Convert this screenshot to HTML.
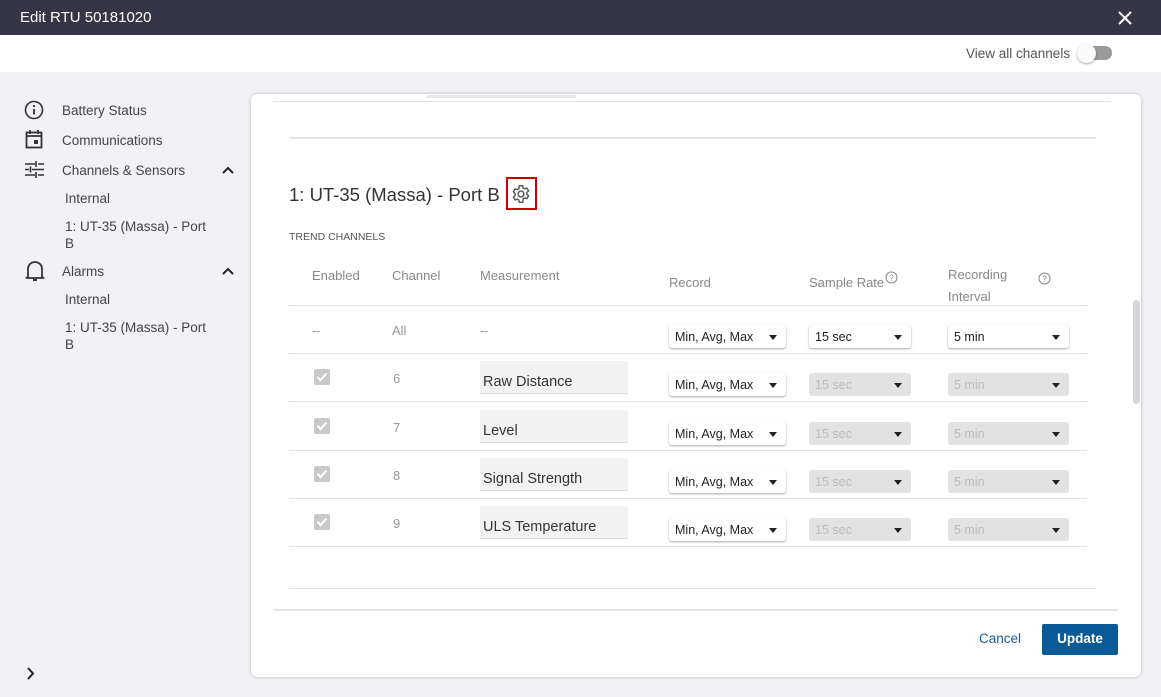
<!DOCTYPE html>
<html><head><style>
*{box-sizing:border-box;margin:0;padding:0}
body{width:1161px;height:697px;position:relative;overflow:hidden;background:#f2f1f6;font-family:"Liberation Sans",sans-serif;color:#333}
.a{position:absolute;white-space:nowrap}
.hd{left:0;top:0;width:1161px;height:35px;background:#363547;color:#fff;font-size:15px;padding:9px 0 0 20px}
.wb{left:0;top:35px;width:1161px;height:37px;background:#fff}
.nav{font-size:13.5px;color:#444}
.card{left:251px;top:94px;width:890px;height:583px;background:#fff;border-radius:6px;box-shadow:0 0 3px rgba(0,0,0,.25)}
.ln{height:1px;background:#e4e4e4}
.th{font-size:13px;color:#888}
.td{font-size:13px;color:#999}
.sel{height:23px;border-radius:3px;background:#fff;box-shadow:0 1px 2px rgba(0,0,0,.35);font-size:12.5px;color:#222;padding:5px 0 0 6px}
.sel.d{background:#e2e2e2;box-shadow:none;color:#bbb}
.sel:after{content:"";position:absolute;right:9px;top:10px;border-left:4.5px solid transparent;border-right:4.5px solid transparent;border-top:5px solid #222}
.ms{width:148px;height:33px;background:#f2f2f2;border-bottom:1px solid #ddd;font-size:14.5px;color:#333;padding:13px 0 0 3px}
.cb{width:16px;height:16px;background:#c9c9c9;border-radius:2px}
.cb svg{position:absolute;left:2px;top:2px}
</style></head><body>
<div class="a hd">Edit RTU 50181020</div>
<svg class="a" style="left:1118px;top:11px" width="14" height="14"><path d="M1 1L13 13M13 1L1 13" stroke="#fff" stroke-width="2"/></svg>
<div class="a wb"></div>
<div class="a" style="left:966px;top:46px;font-size:13.5px;color:#555">View all channels</div>
<div class="a" style="left:1081px;top:46px;width:31px;height:14px;border-radius:7px;background:#9a9a9a"></div>
<div class="a" style="left:1077px;top:44px;width:19px;height:19px;border-radius:50%;background:#fafafa;box-shadow:0 1px 2px rgba(0,0,0,.35)"></div>

<svg class="a" style="left:24px;top:100px" width="20" height="20"><circle cx="10" cy="10" r="8.5" fill="none" stroke="#333" stroke-width="1.6"/><path d="M10 9v5.5" stroke="#333" stroke-width="1.8"/><circle cx="10" cy="6" r="1.1" fill="#333"/></svg>
<div class="a nav" style="left:62px;top:103px">Battery Status</div>
<svg class="a" style="left:25px;top:129px" width="18" height="20"><rect x="1.5" y="3.5" width="15" height="15" fill="none" stroke="#333" stroke-width="1.8"/><path d="M1.5 7h15M5 1v4M13 1v4" stroke="#333" stroke-width="1.8"/><rect x="9" y="11" width="4" height="4" fill="#333"/></svg>
<div class="a nav" style="left:62px;top:133px">Communications</div>
<svg class="a" style="left:25px;top:161px" width="19" height="17"><path d="M0 3h10M13 3h6M11 0v6M0 8.5h4M7 8.5h12M5.5 5.5v6M0 14h10M13 14h6M11 11v6" stroke="#333" stroke-width="1.6"/></svg>
<div class="a nav" style="left:62px;top:163px">Channels &amp; Sensors</div>
<svg class="a" style="left:222px;top:166px" width="12" height="8"><path d="M1 7L6 2L11 7" fill="none" stroke="#222" stroke-width="2"/></svg>
<div class="a nav" style="left:65px;top:191px">Internal</div>
<div class="a nav" style="left:65px;top:218px;white-space:normal;width:150px;line-height:17px">1: UT-35 (Massa) - Port B</div>
<svg class="a" style="left:24px;top:259px" width="22" height="24"><path d="M4 18V10a7 7 0 0 1 14 0v8l2 1H2z" fill="none" stroke="#333" stroke-width="1.8"/><path d="M9 21h4" stroke="#333" stroke-width="2"/></svg>
<div class="a nav" style="left:62px;top:264px">Alarms</div>
<svg class="a" style="left:222px;top:267px" width="12" height="8"><path d="M1 7L6 2L11 7" fill="none" stroke="#222" stroke-width="2"/></svg>
<div class="a nav" style="left:65px;top:292px">Internal</div>
<div class="a nav" style="left:65px;top:319px;white-space:normal;width:150px;line-height:17px">1: UT-35 (Massa) - Port B</div>
<svg class="a" style="left:26px;top:667px" width="10" height="13"><path d="M2 1l5 5.5L2 12" fill="none" stroke="#222" stroke-width="2"/></svg>

<div class="a card"></div>
<div class="a" style="left:427px;top:95px;width:149px;height:3px;background:#e8e8e8"></div>
<div class="a ln" style="left:273px;top:101px;width:838px"></div>
<div class="a ln" style="left:289px;top:137px;width:807px;height:2px"></div>
<div class="a" style="left:289px;top:184px;font-size:18.5px;color:#333">1: UT-35 (Massa) - Port B</div>
<div class="a" style="left:506px;top:177px;width:31px;height:33px;border:2px solid #c00"></div>
<svg class="a" style="left:511px;top:184px" width="20" height="20" viewBox="0 0 24 24"><path d="M12 8.5a3.5 3.5 0 1 0 0 7a3.5 3.5 0 1 0 0-7zM10 2h4l.6 2.8 1.8 1 2.7-.9 2 3.4-2.1 1.9v2.1l2.1 1.9-2 3.4-2.7-.9-1.8 1L14 22h-4l-.6-2.8-1.8-1-2.7.9-2-3.4 2.1-1.9v-2.1L2.9 9.3l2-3.4 2.7.9 1.8-1z" fill="none" stroke="#555" stroke-width="1.7" stroke-linejoin="round"/></svg>
<div class="a" style="left:289px;top:231px;font-size:10.5px;color:#555">TREND CHANNELS</div>

<div class="a th" style="left:312px;top:268px">Enabled</div>
<div class="a th" style="left:392px;top:268px">Channel</div>
<div class="a th" style="left:480px;top:268px">Measurement</div>
<div class="a th" style="left:669px;top:275px">Record</div>
<div class="a th" style="left:809px;top:275px">Sample Rate</div>
<svg class="a" style="left:885px;top:271px" width="13" height="13"><circle cx="6.5" cy="6.5" r="5.5" fill="none" stroke="#888"/><text x="6.5" y="9.5" font-size="8" text-anchor="middle" fill="#888" font-family="Liberation Sans">?</text></svg>
<div class="a th" style="left:948px;top:264px;line-height:22px">Recording<br>Interval</div>
<svg class="a" style="left:1038px;top:272px" width="13" height="13"><circle cx="6.5" cy="6.5" r="5.5" fill="none" stroke="#888"/><text x="6.5" y="9.5" font-size="8" text-anchor="middle" fill="#888" font-family="Liberation Sans">?</text></svg>
<div class="a ln" style="left:289px;top:305px;width:798px"></div>

<div class="a td" style="left:312px;top:323px">--</div>
<div class="a td" style="left:392px;top:323px">All</div>
<div class="a td" style="left:480px;top:323px">--</div>
<div class="a sel" style="left:669px;top:325px;width:117px">Min, Avg, Max</div>
<div class="a sel" style="left:809px;top:325px;width:102px">15 sec</div>
<div class="a sel" style="left:948px;top:325px;width:121px">5 min</div>
<div class="a ln" style="left:289px;top:353px;width:798px"></div>

<!-- rows -->
<div class="a cb" style="left:314px;top:369px"><svg width="12" height="12"><path d="M1.5 6l3 3 6-6.5" fill="none" stroke="#fff" stroke-width="2"/></svg></div>
<div class="a td" style="left:393px;top:371px">6</div>
<div class="a ms" style="left:480px;top:361px">Raw Distance</div>
<div class="a sel" style="left:669px;top:373px;width:117px">Min, Avg, Max</div>
<div class="a sel d" style="left:809px;top:373px;width:102px">15 sec</div>
<div class="a sel d" style="left:948px;top:373px;width:121px">5 min</div>
<div class="a ln" style="left:289px;top:401px;width:798px"></div>

<div class="a cb" style="left:314px;top:418px"><svg width="12" height="12"><path d="M1.5 6l3 3 6-6.5" fill="none" stroke="#fff" stroke-width="2"/></svg></div>
<div class="a td" style="left:393px;top:420px">7</div>
<div class="a ms" style="left:480px;top:410px">Level</div>
<div class="a sel" style="left:669px;top:422px;width:117px">Min, Avg, Max</div>
<div class="a sel d" style="left:809px;top:422px;width:102px">15 sec</div>
<div class="a sel d" style="left:948px;top:422px;width:121px">5 min</div>
<div class="a ln" style="left:289px;top:450px;width:798px"></div>

<div class="a cb" style="left:314px;top:466px"><svg width="12" height="12"><path d="M1.5 6l3 3 6-6.5" fill="none" stroke="#fff" stroke-width="2"/></svg></div>
<div class="a td" style="left:393px;top:468px">8</div>
<div class="a ms" style="left:480px;top:458px">Signal Strength</div>
<div class="a sel" style="left:669px;top:470px;width:117px">Min, Avg, Max</div>
<div class="a sel d" style="left:809px;top:470px;width:102px">15 sec</div>
<div class="a sel d" style="left:948px;top:470px;width:121px">5 min</div>
<div class="a ln" style="left:289px;top:498px;width:798px"></div>

<div class="a cb" style="left:314px;top:514px"><svg width="12" height="12"><path d="M1.5 6l3 3 6-6.5" fill="none" stroke="#fff" stroke-width="2"/></svg></div>
<div class="a td" style="left:393px;top:516px">9</div>
<div class="a ms" style="left:480px;top:506px">ULS Temperature</div>
<div class="a sel" style="left:669px;top:518px;width:117px">Min, Avg, Max</div>
<div class="a sel d" style="left:809px;top:518px;width:102px">15 sec</div>
<div class="a sel d" style="left:948px;top:518px;width:121px">5 min</div>
<div class="a ln" style="left:289px;top:546px;width:798px"></div>

<div class="a ln" style="left:289px;top:588px;width:807px"></div>
<div class="a ln" style="left:273px;top:609px;width:845px;height:2px"></div>
<div class="a" style="left:1133px;top:300px;width:7px;height:104px;border-radius:4px;background:#d6d6d6"></div>

<div class="a" style="left:979px;top:631px;font-size:13.5px;color:#1a5e96">Cancel</div>
<div class="a" style="left:1042px;top:624px;width:76px;height:31px;background:#0a5a96;border-radius:2px;color:#fff;font-size:13.5px;font-weight:bold;text-align:center;padding-top:7px">Update</div>
</body></html>
